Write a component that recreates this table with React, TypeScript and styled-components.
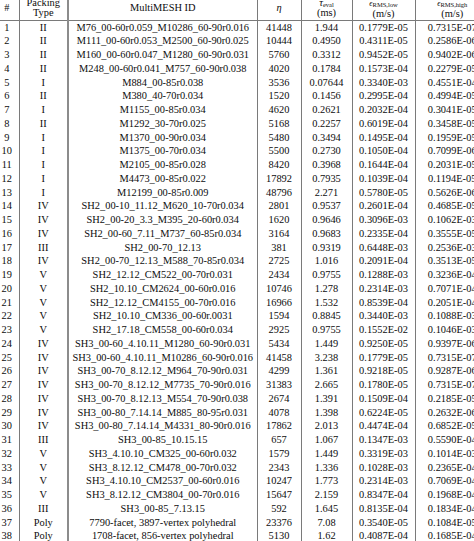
import styled, { createGlobalStyle } from 'styled-components';

type Row = [string, string, string, string, string, string, string];

const rows: Row[] = [
  ['1', 'II', 'M76_00-60r0.059_M10286_60-90r0.016', '41448', '1.944', '0.1779E-05', '0.7315E-07'],
  ['2', 'II', 'M111_00-60r0.053_M2500_60-90r0.025', '10444', '0.4950', '0.4311E-05', '0.2586E-06'],
  ['3', 'II', 'M160_00-60r0.047_M1280_60-90r0.031', '5760', '0.3312', '0.9452E-05', '0.9402E-06'],
  ['4', 'II', 'M248_00-60r0.041_M757_60-90r0.038', '4020', '0.1784', '0.1573E-04', '0.2279E-05'],
  ['5', 'I', 'M884_00-85r0.038', '3536', '0.07644', '0.3340E-03', '0.4551E-04'],
  ['6', 'II', 'M380_40-70r0.034', '1520', '0.1456', '0.2995E-04', '0.4994E-05'],
  ['7', 'I', 'M1155_00-85r0.034', '4620', '0.2621', '0.2032E-04', '0.3041E-05'],
  ['8', 'II', 'M1292_30-70r0.025', '5168', '0.2257', '0.6019E-04', '0.3458E-05'],
  ['9', 'I', 'M1370_00-90r0.034', '5480', '0.3494', '0.1495E-04', '0.1959E-05'],
  ['10', 'I', 'M1375_00-70r0.034', '5500', '0.2730', '0.1050E-04', '0.7099E-06'],
  ['11', 'I', 'M2105_00-85r0.028', '8420', '0.3968', '0.1644E-04', '0.2031E-05'],
  ['12', 'I', 'M4473_00-85r0.022', '17892', '0.7935', '0.1039E-04', '0.1194E-05'],
  ['13', 'I', 'M12199_00-85r0.009', '48796', '2.271', '0.5780E-05', '0.5626E-06'],
  ['14', 'IV', 'SH2_00-10_11.12_M620_10-70r0.034', '2801', '0.9537', '0.2601E-04', '0.4685E-05'],
  ['15', 'IV', 'SH2_00-20_3.3_M395_20-60r0.034', '1620', '0.9646', '0.3096E-03', '0.1062E-03'],
  ['16', 'IV', 'SH2_00-60_7.11_M737_60-85r0.034', '3164', '0.9683', '0.2335E-04', '0.3555E-05'],
  ['17', 'III', 'SH2_00-70_12.13', '381', '0.9319', '0.6448E-03', '0.2536E-03'],
  ['18', 'IV', 'SH2_00-70_12.13_M588_70-85r0.034', '2725', '1.016', '0.2091E-04', '0.3513E-05'],
  ['19', 'V', 'SH2_12.12_CM522_00-70r0.031', '2434', '0.9755', '0.1288E-03', '0.3236E-04'],
  ['20', 'V', 'SH2_10.10_CM2624_00-60r0.016', '10746', '1.278', '0.2314E-03', '0.7071E-04'],
  ['21', 'V', 'SH2_12.12_CM4155_00-70r0.016', '16966', '1.532', '0.8539E-04', '0.2051E-04'],
  ['22', 'V', 'SH2_10.10_CM336_00-60r.0031', '1594', '0.8845', '0.3440E-03', '0.1088E-03'],
  ['23', 'V', 'SH2_17.18_CM558_00-60r0.034', '2925', '0.9755', '0.1552E-02', '0.1046E-03'],
  ['24', 'IV', 'SH3_00-60_4.10.11_M1280_60-90r0.031', '5434', '1.449', '0.9250E-05', '0.9397E-06'],
  ['25', 'IV', 'SH3_00-60_4.10.11_M10286_60-90r0.016', '41458', '3.238', '0.1779E-05', '0.7315E-07'],
  ['26', 'IV', 'SH3_00-70_8.12.12_M964_70-90r0.031', '4299', '1.361', '0.9218E-05', '0.9287E-06'],
  ['27', 'IV', 'SH3_00-70_8.12.12_M7735_70-90r0.016', '31383', '2.665', '0.1780E-05', '0.7315E-07'],
  ['28', 'IV', 'SH3_00-70_8.12.13_M554_70-90r0.038', '2674', '1.391', '0.1509E-04', '0.2185E-05'],
  ['29', 'IV', 'SH3_00-80_7.14.14_M885_80-95r0.031', '4078', '1.398', '0.6224E-05', '0.2632E-06'],
  ['30', 'IV', 'SH3_00-80_7.14.14_M4331_80-90r0.016', '17862', '2.013', '0.4474E-04', '0.6852E-05'],
  ['31', 'III', 'SH3_00-85_10.15.15', '657', '1.067', '0.1347E-03', '0.5590E-04'],
  ['32', 'V', 'SH3_4.10.10_CM325_00-60r0.032', '1579', '1.449', '0.3319E-03', '0.1014E-03'],
  ['33', 'V', 'SH3_8.12.12_CM478_00-70r0.032', '2343', '1.336', '0.1028E-03', '0.2365E-04'],
  ['34', 'V', 'SH3_4.10.10_CM2537_00-60r0.016', '10247', '1.773', '0.2314E-03', '0.7069E-04'],
  ['35', 'V', 'SH3_8.12.12_CM3804_00-70r0.016', '15647', '2.159', '0.8347E-04', '0.1968E-04'],
  ['36', 'III', 'SH3_00-85_7.13.15', '592', '1.645', '0.8135E-04', '0.1834E-04'],
  ['37', 'Poly', '7790-facet, 3897-vertex polyhedral', '23376', '7.08', '0.3540E-05', '0.1084E-05'],
  ['38', 'Poly', '1708-facet, 856-vertex polyhedral', '5130', '1.62', '0.4087E-04', '0.1685E-04'],
];

const widths = [24, 49, 189, 44, 51, 63, 74];

const GlobalStyle = createGlobalStyle`
  html, body {
    margin: 0;
    background: #fff;
    overflow: hidden;
  }
  body {
    width: 474px;
    height: 541px;
  }
`;

const Table = styled.table`
  margin: -3.5px 0 0 -5px;
  border-collapse: collapse;
  table-layout: fixed;
  width: ${widths.reduce((a, b) => a + b, 0)}px;
  font-family: 'Liberation Serif', 'Times New Roman', serif;
  font-size: 10.4px;
  color: #0d0d0d;
`;

const Cell = styled.td<{ $double?: boolean; $last?: boolean }>`
  padding: 0;
  text-align: center;
  white-space: nowrap;
  overflow: hidden;
  height: 13.75px;
  line-height: 13.75px;
  border-right: ${(p) => (p.$last ? 'none' : p.$double ? '2px solid #8c8c8c' : '1px solid #7a7a7a')};
`;

const HeadCell = styled(Cell).attrs({ as: 'th' })`
  height: 23px;
  line-height: 10px;
  font-weight: normal;
  vertical-align: middle;
  border-bottom: 1px solid #7a7a7a;
`;

const Greek = styled.i`
  font-style: italic;
`;

const Bar = styled.i`
  font-style: italic;
  text-decoration: overline;
`;

const Sub = styled.sub`
  font-size: 6.5px;
  vertical-align: -1px;
  line-height: 0;
`;

const Small = styled.span`
  font-size: 8px;
`;

export default function App() {
  return (
    <>
      <GlobalStyle />
      <Table>
        <colgroup>
          {widths.map((w, i) => (
            <col key={i} style={{ width: w }} />
          ))}
        </colgroup>
        <thead>
          <tr>
            <HeadCell>#</HeadCell>
            <HeadCell $double>
              Packing
              <br />
              Type
            </HeadCell>
            <HeadCell>MultiMESH ID</HeadCell>
            <HeadCell>
              <Greek>η</Greek>
            </HeadCell>
            <HeadCell>
              <Bar>τ</Bar>
              <Sub>eval</Sub>
              <br />
              (ms)
            </HeadCell>
            <HeadCell>
              <Small>
                <Greek>ϵ</Greek>
              </Small>
              <Sub>RMS,low</Sub>
              <br />
              (m/s)
            </HeadCell>
            <HeadCell $last>
              <Small>
                <Greek>ϵ</Greek>
              </Small>
              <Sub>RMS,high</Sub>
              <br />
              (m/s)
            </HeadCell>
          </tr>
        </thead>
        <tbody>
          {rows.map((r) => (
            <tr key={r[0]}>
              {r.map((v, i) => (
                <Cell key={i} $double={i === 1} $last={i === 6}>
                  {v}
                </Cell>
              ))}
            </tr>
          ))}
        </tbody>
      </Table>
    </>
  );
}
